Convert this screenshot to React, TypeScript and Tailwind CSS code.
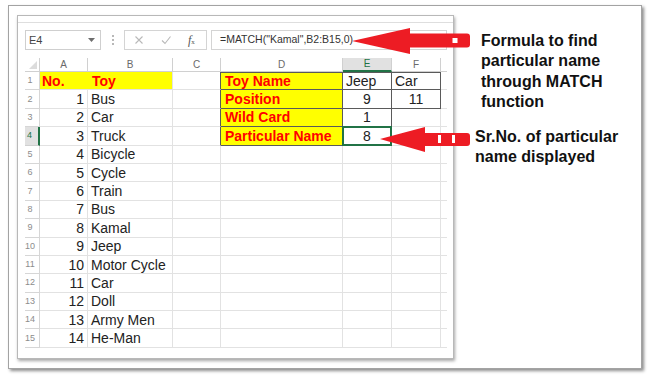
import React from "react";

type Row = { a: string; b: string; d?: string; e?: string; f?: string };

const rows: Row[] = [
  { a: "No.", b: "Toy", d: "Toy Name", e: "Jeep", f: "Car" },
  { a: "1", b: "Bus", d: "Position", e: "9", f: "11" },
  { a: "2", b: "Car", d: "Wild Card", e: "1" },
  { a: "3", b: "Truck", d: "Particular Name", e: "8" },
  { a: "4", b: "Bicycle" },
  { a: "5", b: "Cycle" },
  { a: "6", b: "Train" },
  { a: "7", b: "Bus" },
  { a: "8", b: "Kamal" },
  { a: "9", b: "Jeep" },
  { a: "10", b: "Motor Cycle" },
  { a: "11", b: "Car" },
  { a: "12", b: "Doll" },
  { a: "13", b: "Army Men" },
  { a: "14", b: "He-Man" },
];

const cols = ["A", "B", "C", "D", "E", "F", ""];
const gridCols = "grid grid-cols-[15px_48px_85px_48px_122px_49px_49px_6px]";

function FormulaBar() {
  return (
    <div className="mt-[7px] h-[20px] flex items-stretch pl-[7px]">
      {/* name box */}
      <div className="w-[76px] border border-[#cfcfcf] flex items-center justify-between pl-[3px] pr-[5px] text-[11px] text-[#444]">
        <span>E4</span>
        <svg width="7" height="4" viewBox="0 0 7 4">
          <path d="M0 0 L7 0 L3.5 4 Z" fill="#6d6d6d" />
        </svg>
      </div>
      <div className="ml-[10px] w-[4px] flex flex-col items-center justify-center gap-[2px]">
        <span className="w-[2px] h-[2px] bg-[#b8b8b8]" />
        <span className="w-[2px] h-[2px] bg-[#b8b8b8]" />
        <span className="w-[2px] h-[2px] bg-[#b8b8b8]" />
      </div>
      {/* cancel / enter / fx */}
      <div className="ml-[9px] w-[83px] border border-[#d4d4d4] flex items-center pl-[9px] gap-[17px]">
        <svg width="10" height="10" viewBox="0 0 10 10">
          <path d="M1.5 1.5 L8.5 8.5 M8.5 1.5 L1.5 8.5" stroke="#b9b9b9" strokeWidth="1.1" />
        </svg>
        <svg width="10" height="10" viewBox="0 0 10 10">
          <path d="M1 5.5 L4 8.5 L9.5 1.5" stroke="#b9b9b9" strokeWidth="1.1" fill="none" />
        </svg>
        <span className="w-[10px] font-['Liberation_Serif',serif] italic text-[12px] leading-none text-[#555]">
          f<span className="text-[7px] not-italic">x</span>
        </span>
      </div>
      <div className="ml-[4px] w-[236px] border border-[#d4d4d4] flex items-center pl-[8px] text-[10.5px] text-[#333]">
        =MATCH("Kamal",B2:B15,0)
      </div>
    </div>
  );
}

function HeaderRow() {
  return (
    <div className={`${gridCols} mt-[8px] h-[14px] text-[10px] text-[#6a6a6a] leading-none`}>
      <div className="border-r border-b border-[#d0d0d0] flex items-end justify-end pr-[2px] pb-[2px]">
        <svg width="8" height="8" viewBox="0 0 8 8">
          <path d="M8 0 L8 8 L0 8 Z" fill="#dcdcdc" />
        </svg>
      </div>
      {cols.map((c, i) =>
        c === "E" ? (
          <div key={i} className="bg-[#e1e1e1] border-r border-[#d0d0d0] border-b-2 border-b-[#217346] text-[#217346] flex items-center justify-center">
            {c}
          </div>
        ) : (
          <div key={i} className={i === 6 ? "border-b border-[#d0d0d0]" : "border-r border-b border-[#d0d0d0] flex items-center justify-center"}>
            {c}
          </div>
        )
      )}
    </div>
  );
}

function DataRow({ r, i }: { r: Row; i: number }) {
  const top = i < 4;
  const first = i === 0;
  const grid = "border-r border-b border-[#e2e2e2]";
  const dark = "border-r border-b border-[#5a5a5a]";
  return (
    <div className={`${gridCols} h-[18.4px] text-[14px] text-[#222] leading-none`}>
      <div
        className={
          i === 3
            ? "bg-[#e1e1e1] border-r-2 border-r-[#217346] border-b border-b-[#d0d0d0] text-[9px] text-[#217346] flex items-center justify-center pr-[4px]"
            : "border-r border-b border-[#d6d6d6] text-[9px] text-[#8c8c8c] flex items-center justify-center pr-[4px]"
        }
      >
        {i + 1}
      </div>
      {first ? (
        <div className="bg-[#ffff00] border-b border-[#e2e2e2] flex items-center pl-[2px] font-bold text-[#ff0000]">{r.a}</div>
      ) : (
        <div className={`${grid} flex items-center justify-end pr-[3px]`}>{r.a}</div>
      )}
      {first ? (
        <div className="bg-[#ffff00] border-r border-b border-[#e2e2e2] flex items-center pl-[4px] font-bold text-[#ff0000]">{r.b}</div>
      ) : (
        <div className={`${grid} flex items-center pl-[3px]`}>{r.b}</div>
      )}
      <div className={top ? "border-r border-r-[#5a5a5a] border-b border-b-[#e2e2e2]" : grid} />
      {top ? (
        <div className={`${dark} ${first ? "border-t" : ""} bg-[#ffff00] flex items-center pl-[4px] font-bold text-[#ff0000] whitespace-nowrap`}>
          {r.d}
        </div>
      ) : (
        <div className={grid} />
      )}
      {top ? (
        <div className={`${dark} ${first ? "border-t justify-start pl-[3px]" : "justify-center"} relative flex items-center`}>
          {r.e}
          {i === 3 && <div className="absolute -left-px -top-px -right-px -bottom-px border-2 border-[#217346]" />}
        </div>
      ) : (
        <div className={grid} />
      )}
      {i < 2 ? (
        <div className={`${dark} ${first ? "border-t justify-start pl-[3px]" : "justify-center"} flex items-center`}>{r.f}</div>
      ) : (
        <div className={grid} />
      )}
      <div className="border-b border-[#e2e2e2]" />
    </div>
  );
}

function Arrows() {
  return (
    <svg className="absolute left-0 top-0 pointer-events-none" width="650" height="380" viewBox="0 0 650 380">
      <path d="M352 41 L410 28 L410 33.5 L467 33.5 Q470 33.5 470 36.5 L470 44.5 Q470 47.5 467 47.5 L410 47.5 L410 54 Z" fill="#ed1c24" />
      <rect x="452.5" y="38" width="5" height="5" fill="#fff" />
      <path d="M380 139 L425 127 L425 133 L467 133 Q470 133 470 136 L470 143 Q470 146 467 146 L425 146 L425 152 Z" fill="#ed1c24" />
      <rect x="438" y="135" width="3" height="8" fill="#fff" />
      <rect x="452" y="135" width="3" height="8" fill="#fff" />
    </svg>
  );
}

export default function App() {
  return (
    <div className="relative w-[650px] h-[380px] bg-white pl-[8px] pt-[5px] font-['Liberation_Sans',Arial,sans-serif]">
      <div className="w-[634px] h-[364px] border border-[#a3a3a3] shadow-[2px_2px_3px_rgba(0,0,0,0.45)] flex">
        {/* excel screenshot */}
        <div className="ml-[8px] mt-[9px] w-[437px] h-[344px] border border-[#b8b8b8] shadow-[1px_2px_3px_rgba(0,0,0,0.35)] flex flex-col">
          <div className="h-[7px] border-b border-[#dedede]" />
          <FormulaBar />
          <div className="pl-[7px]">
            <HeaderRow />
            {rows.map((r, i) => (
              <DataRow key={i} r={r} i={i} />
            ))}
          </div>
        </div>
        {/* notes */}
        <div className="ml-[21px] flex flex-col text-[16px] leading-[20.3px] font-bold text-[#111]">
          <div className="mt-[25px] pl-[6px]">
            Formula to find
            <br />
            particular name
            <br />
            through MATCH
            <br />
            function
          </div>
          <div className="mt-[15px]">
            Sr.No. of particular
            <br />
            name displayed
          </div>
        </div>
      </div>
      <Arrows />
    </div>
  );
}
